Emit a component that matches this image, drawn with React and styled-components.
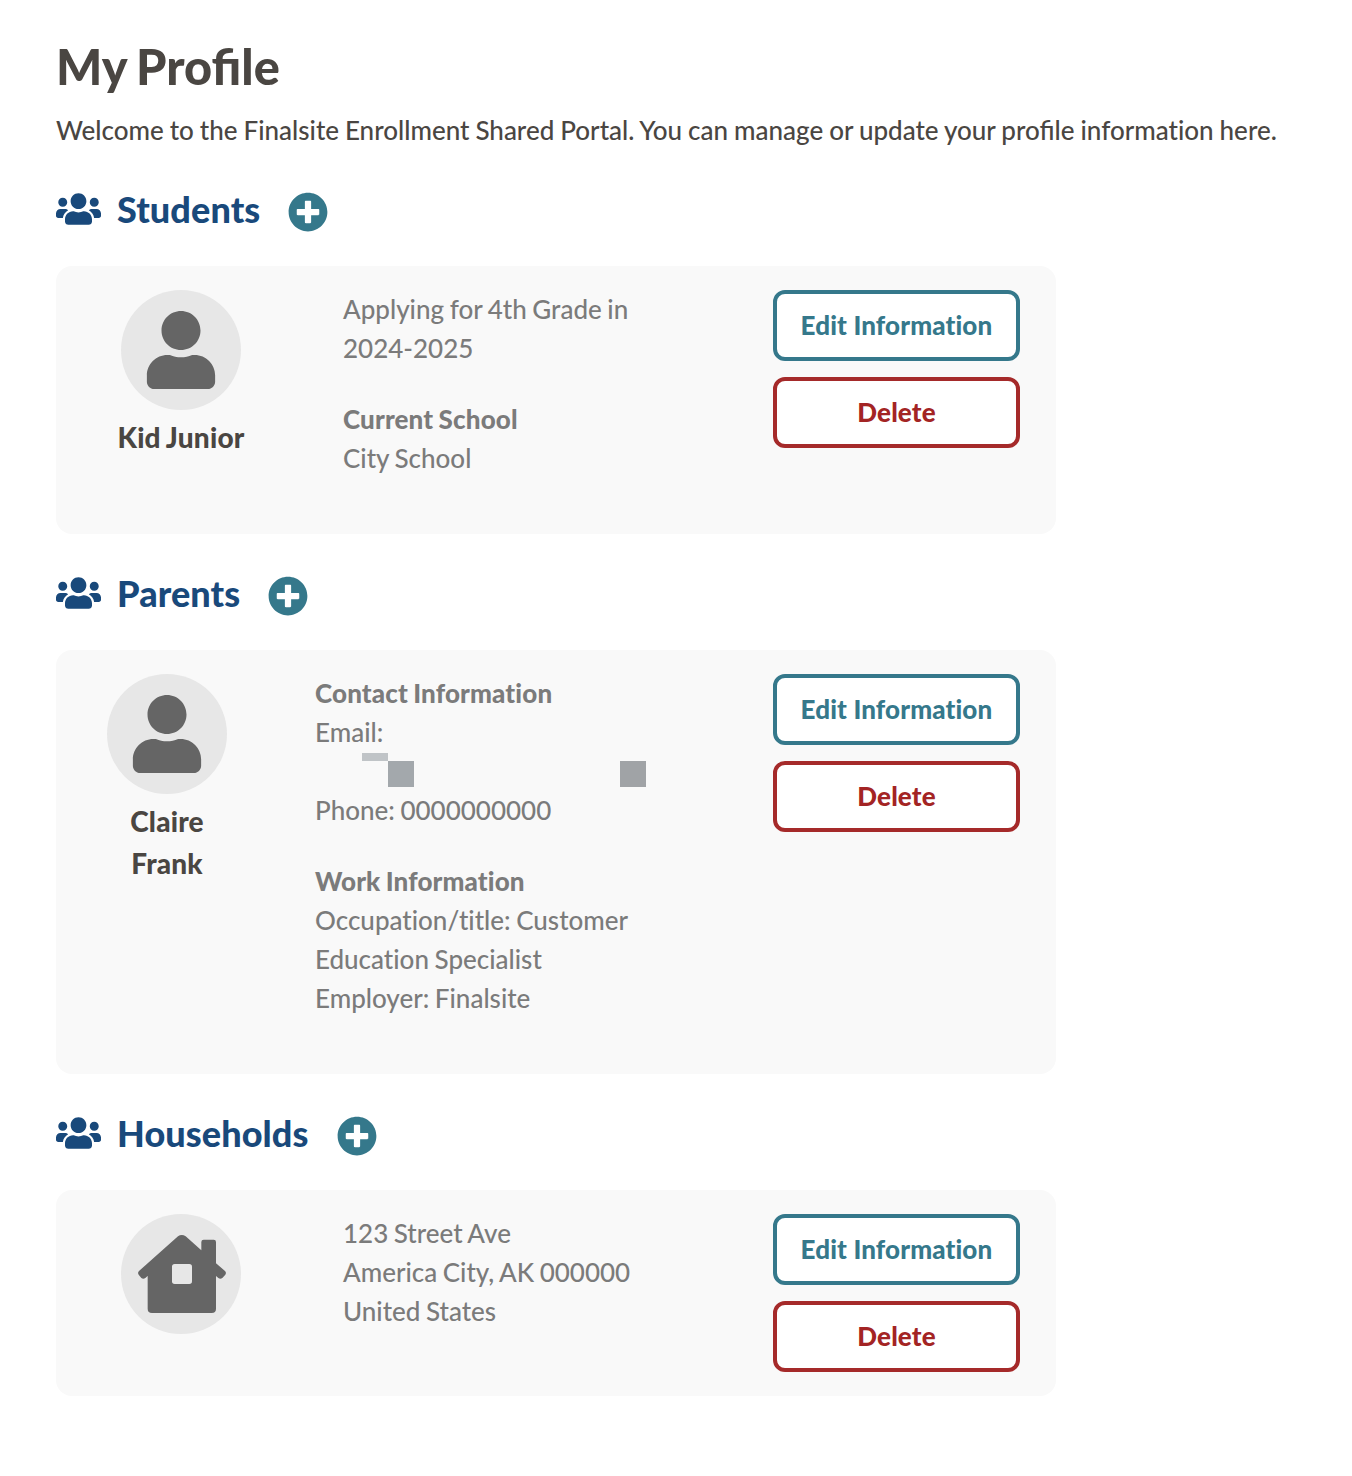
import React from "react";
import { FaPlusCircle, FaUser, FaUsers } from "react-icons/fa";
import styled, { createGlobalStyle } from "styled-components";

const GlobalStyle = createGlobalStyle`
  * {
    box-sizing: border-box;
  }
  body {
    margin: 0;
    background: #fff;
    color: #4a4642;
    font-family: Lato, "Liberation Sans", sans-serif;
    font-size: 26px;
    font-weight: 500;
    line-height: 39px;
    font-variant-ligatures: none;
    word-spacing: -1px;
  }
  b {
    font-weight: 900;
    letter-spacing: 0.14px;
  }
`;

const Page = styled.main`
  min-height: 1476px;
  padding: 37px 56px 0;
`;

const Title = styled.h1`
  margin: 0;
  font-size: 48.7px;
  line-height: 58px;
  font-weight: 900;
  font-variant-ligatures: normal;
  word-spacing: -2px;
`;

const Intro = styled.p`
  margin: 16px 0 0;
  white-space: nowrap;
  word-spacing: -0.6px;

  span {
    font-variant-ligatures: normal;
  }
`;

const SectionHeader = styled.header`
  display: flex;
  align-items: center;
  height: 116px;
  padding-top: 2px;
  color: #19497b;

  h2 {
    margin: 0 28px 0 16px;
    font-size: 36px;
    line-height: 44px;
    font-weight: 900;
    letter-spacing: 0.1px;
  }
`;

const UsersIcon = styled(FaUsers)`
  width: 45px;
  height: 36px;
`;

const AddButton = styled.button`
  display: flex;
  margin: 6px 0 0;
  padding: 0;
  border: 0;
  background: none;
  color: #35788b;
  font-size: 40px;
`;

const Card = styled.article`
  display: flex;
  align-items: flex-start;
  width: 1000px;
  padding: 24px 36px 24px 24px;
  border-radius: 16px;
  background: #f9f9f9;
`;

const Person = styled.div`
  display: flex;
  flex-direction: column;
  align-items: center;
  width: ${(props) => (props.$narrow ? "174px" : "202px")};
  margin-right: 61px;
`;

const Avatar = styled.div`
  display: flex;
  align-items: center;
  justify-content: center;
  width: 120px;
  height: 120px;
  border-radius: 50%;
  background: #e7e7e7;
  color: #656565;

  svg {
    width: auto;
    height: 78px;
  }
`;

const Name = styled.div`
  width: ${(props) => (props.$narrow ? "120px" : "auto")};
  margin-top: 6px;
  font-size: 28px;
  line-height: 42px;
  font-weight: 900;
  letter-spacing: 0.2px;
  text-align: center;
`;

const Details = styled.div`
  width: 340px;
  color: #7b7b7b;
`;

const Block = styled.div`
  margin-bottom: 32px;
`;

const Actions = styled.div`
  display: flex;
  flex-direction: column;
  gap: 16px;
  width: 247px;
  margin-left: auto;
`;

const Button = styled.button`
  height: 71px;
  padding: 0;
  border: 4px solid ${(props) => (props.$danger ? "#a52a2a" : "#35788b")};
  border-radius: 12px;
  background: #fff;
  color: ${(props) => (props.$danger ? "#a32424" : "#35788b")};
  font: 900 26px/39px Lato, "Liberation Sans", sans-serif;
  font-variant-ligatures: none;
  letter-spacing: 0.14px;
`;

const HiddenEmail = styled.div`
  display: flex;
  height: 39px;
  padding: 1px 0 0 47px;
`;

const Pixel = styled.span`
  width: 26px;
  height: ${(props) => (props.$short ? "8px" : "26px")};
  margin-top: ${(props) => (props.$short ? "0" : "8px")};
  margin-left: ${(props) => props.$gap || "0"};
  background: ${(props) => props.$color};
`;

function HouseIcon() {
  return (
    <svg viewBox="-3 0 267 234" fill="currentColor">
      <path
        fillRule="evenodd"
        d="M120 4Q131 -4 143 4L190 46V21Q190 14 197 14H227Q234 14 234 21V85L261 108Q266 113 262 119L253 129Q247 134 241 129L234 123V221Q234 234 221 234H42Q29 234 29 221V123L22 129Q16 134 10 129L2 119Q-2 113 3 108ZM110 87Q102 87 102 95V139Q102 147 110 147H154Q162 147 162 139V95Q162 87 154 87Z"
      />
    </svg>
  );
}

function SectionTitle({ children }) {
  return (
    <SectionHeader>
      <UsersIcon />
      <h2>{children}</h2>
      <AddButton aria-label={`Add ${children}`}>
        <FaPlusCircle />
      </AddButton>
    </SectionHeader>
  );
}

function ProfileCard({ icon, name, narrow, children }) {
  return (
    <Card>
      <Person $narrow={narrow}>
        <Avatar>{icon}</Avatar>
        {name && <Name $narrow={narrow}>{name}</Name>}
      </Person>
      <Details>{children}</Details>
      <Actions>
        <Button>Edit Information</Button>
        <Button $danger>Delete</Button>
      </Actions>
    </Card>
  );
}

export default function App() {
  return (
    <>
      <GlobalStyle />
      <Page>
        <Title>My Profile</Title>
        <Intro>
          Welcome to the Finalsite Enrollment Shared Portal. You can manage or
          update your <span>profile</span> information here.
        </Intro>

        <SectionTitle>Students</SectionTitle>
        <ProfileCard icon={<FaUser />} name="Kid Junior">
          <Block>
            Applying for 4th Grade in
            <br />
            2024-2025
          </Block>
          <Block>
            <b>Current School</b>
            <div>City School</div>
          </Block>
        </ProfileCard>

        <SectionTitle>Parents</SectionTitle>
        <ProfileCard icon={<FaUser />} name="Claire Frank" narrow>
          <Block>
            <b>Contact Information</b>
            <div>Email:</div>
            <HiddenEmail>
              <Pixel $short $color="#c0c4c7" />
              <Pixel $color="#a3a8ac" />
              <Pixel $color="#a0a3a6" $gap="206px" />
            </HiddenEmail>
            <div>Phone: 0000000000</div>
          </Block>
          <Block>
            <b>Work Information</b>
            <div>Occupation/title: Customer Education Specialist</div>
            <div>Employer: Finalsite</div>
          </Block>
        </ProfileCard>

        <SectionTitle>Households</SectionTitle>
        <ProfileCard icon={<HouseIcon />}>
          <div>123 Street Ave</div>
          <div>America City, AK 000000</div>
          <div>United States</div>
        </ProfileCard>
      </Page>
    </>
  );
}
